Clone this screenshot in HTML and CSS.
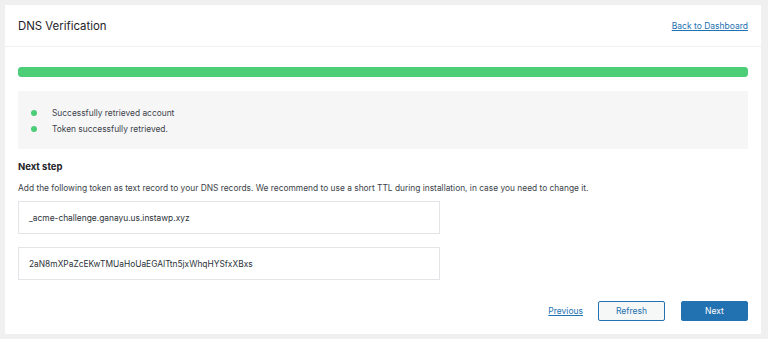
FILE: index.html
```html
<!DOCTYPE html>
<html lang="en">
<head>
<meta charset="utf-8">
<title>DNS Verification</title>
<link rel="stylesheet" href="styles.css">
</head>
<body>
<div class="card">
  <div class="card-header">
    <h1 class="title">DNS Verification</h1>
    <a class="link" href="#">Back to Dashboard</a>
  </div>
  <div class="card-body">
    <div class="progress"><div class="progress-fill"></div></div>
    <ul class="status">
      <li class="status-item"><span class="dot"></span>Successfully retrieved account</li>
      <li class="status-item"><span class="dot"></span>Token successfully retrieved.</li>
    </ul>
    <h2 class="step-title">Next step</h2>
    <p class="step-desc">Add the following token as text record to your DNS records. We recommend to use a short TTL during installation, in case you need to change it.</p>
    <div class="field">_acme-challenge.ganayu.us.instawp.xyz</div>
    <div class="field">2aN8mXPaZcEKwTMUaHoUaEGAITtn5jxWhqHYSfxXBxs</div>
    <div class="actions">
      <a class="link" href="#">Previous</a>
      <button class="btn btn-secondary">Refresh</button>
      <button class="btn btn-primary">Next</button>
    </div>
  </div>
</div>
</body>
</html>
```
FILE: styles.css
```css
html, body {
  margin: 0;
  padding: 0;
  background: #f0f0f1;
  font-family: Inter, "Liberation Sans", sans-serif;
  color: #1d2327;
}
body {
  padding: 5px 0 0 5px;
}
.card {
  width: 756px;
  height: 329px;
  background: #fff;
  box-sizing: border-box;
  display: flex;
  flex-direction: column;
}
.card-header {
  height: 42px;
  box-sizing: border-box;
  border-bottom: 1px solid #f0f0f1;
  display: flex;
  align-items: center;
  justify-content: space-between;
  padding: 0 13px 0 13px;
}
.title {
  margin: 0;
  font-size: 11.4px;
  font-weight: 400;
  color: #1d2327;
}
.link {
  font-size: 8.5px;
  color: #2271b1;
  text-decoration: underline;
}
.card-body {
  padding: 20px 13px 13px 13px;
  display: flex;
  flex-direction: column;
  flex: 1;
}
.progress {
  height: 10px;
  border-radius: 3px;
  background: #e5e5e5;
  overflow: hidden;
}
.progress-fill {
  height: 100%;
  width: 100%;
  background: #4ccd78;
  border-radius: 3px;
}
.status {
  list-style: none;
  margin: 14px 0 0 0;
  padding: 14px 13px 12px 13px;
  background: #f6f6f7;
  font-size: 8.4px;
  color: #3c434a;
}
.status-item {
  display: flex;
  align-items: center;
  height: 16px;
}
.dot {
  width: 6px;
  height: 6px;
  border-radius: 50%;
  background: #4ccd78;
  margin-right: 15px;
}
.step-title {
  margin: 11px 0 0 0;
  font-size: 9.5px;
  font-weight: 700;
  line-height: 14px;
  color: #1d2327;
}
.step-desc {
  margin: 8px 0 0 0;
  font-size: 8.4px;
  line-height: 13px;
  color: #3c434a;
}
.field {
  width: 422px;
  height: 33px;
  box-sizing: border-box;
  border: 1px solid #e2e4e7;
  display: flex;
  align-items: center;
  padding-left: 10px;
  font-size: 8.4px;
  color: #2c3338;
  margin-top: 6px;
}
.field + .field {
  margin-top: 13px;
}
.actions {
  margin-top: auto;
  display: flex;
  justify-content: flex-end;
  align-items: center;
}
.actions .link {
  margin-right: 15px;
}
.btn {
  width: 67px;
  height: 20px;
  box-sizing: border-box;
  border-radius: 2px;
  font-family: Inter, "Liberation Sans", sans-serif;
  font-size: 8.5px;
  padding: 0;
  cursor: pointer;
}
.btn-secondary {
  background: #f6f7f7;
  border: 1px solid #2271b1;
  color: #2271b1;
  margin-right: 16px;
}
.btn-primary {
  background: #2271b1;
  border: 1px solid #2271b1;
  color: #fff;
}
```
